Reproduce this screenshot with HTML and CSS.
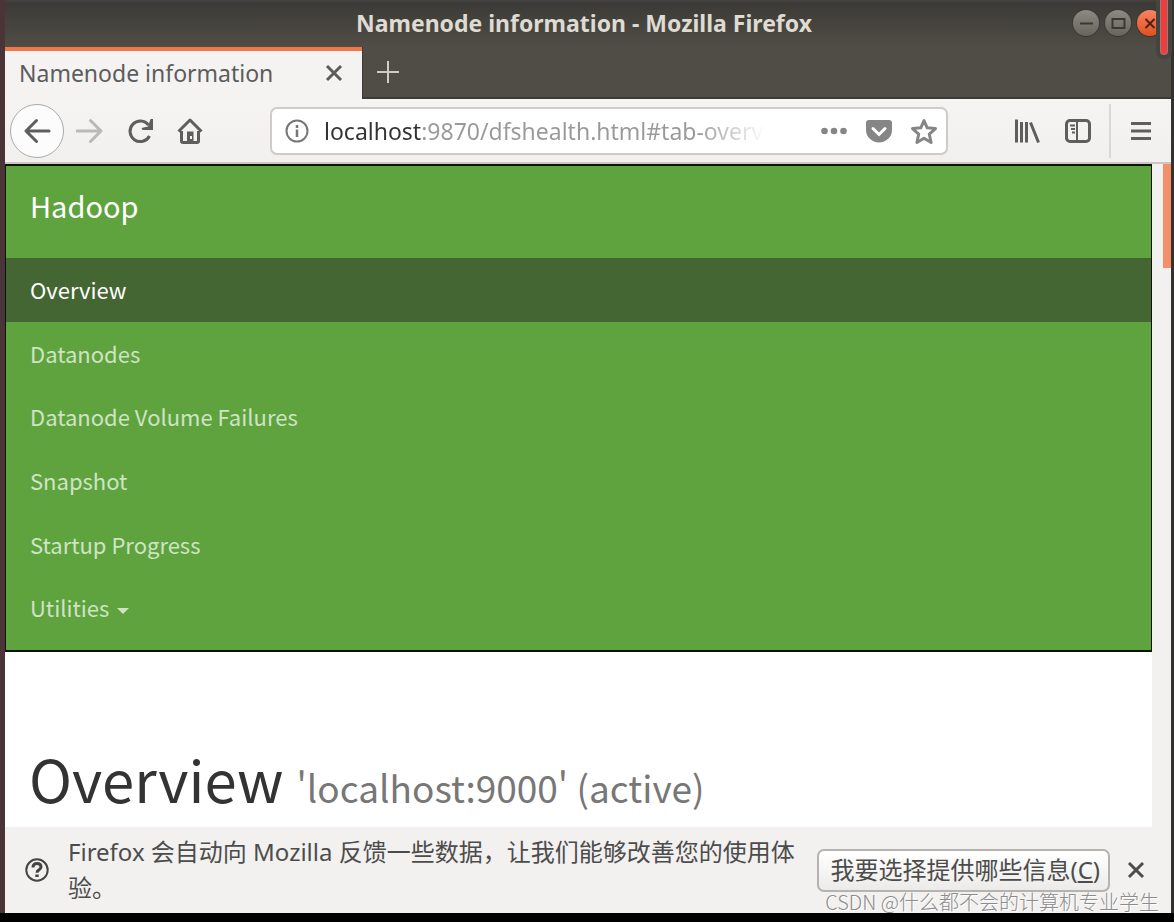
FILE: index.html
```html
<!DOCTYPE html>
<html lang="zh-CN">
<head>
<meta charset="utf-8">
<meta name="viewport" content="width=device-width, initial-scale=1">
<title>Namenode information</title>
<link rel="stylesheet" href="styles.css">
</head>
<body>
<div class="window">
  <header class="titlebar">
    <span class="title">Namenode information - Mozilla Firefox</span>
    <div class="controls">
      <button class="control" aria-label="Minimize"><svg viewBox="0 0 26 26"><path d="M7 13.500h13"/></svg></button>
      <button class="control" aria-label="Maximize"><svg viewBox="0 0 26 26"><path d="M7.500 9h12v9h-12z"/></svg></button>
      <button class="control control-close" aria-label="Close"><svg viewBox="0 0 26 26"><path d="M8.500 9l9 9M17.500 9l-9 9"/></svg></button>
    </div>
  </header>

  <div class="tabs">
    <div class="tab">
      <span class="tab-label">Namenode information</span>
      <button class="icon-button" aria-label="Close tab"><svg class="icon tab-close" viewBox="0 0 24 24"><path d="M5 5l14 14M19 5L5 19"/></svg></button>
    </div>
    <button class="new-tab" aria-label="New tab"><svg class="icon" viewBox="0 0 24 24"><path d="M12 1v22M1 12h22"/></svg></button>
  </div>

  <div class="toolbar">
    <div class="nav-buttons">
      <button class="back" aria-label="Back"><svg class="icon-large" viewBox="0 0 28 28"><path d="M26 14H3M13.500 3.500L3 14l10.500 10.500"/></svg></button>
      <button class="icon-button disabled" aria-label="Forward"><svg class="icon-large" viewBox="0 0 28 28"><path d="M1 14h24M14.500 3.500L25 14 14.500 24.500"/></svg></button>
      <button class="icon-button" aria-label="Reload"><svg class="icon-large" viewBox="0 0 28 28"><path class="stroke-heavy" d="M22.500 8A10.300 10.300 0 1 0 23.500 19"/><path class="solid" d="M27 2v11H16.500l-1-2 6.500-1.500 2.500-7.500z"/></svg></button>
      <button class="icon-button" aria-label="Home"><svg class="icon-large" viewBox="0 0 28 28"><path class="stroke-heavy" d="M2.500 14.500L14 3l11.500 11.500M5.500 14v10q0 1.500 1.500 1.500h14q1.500 0 1.500-1.500V14"/><path class="solid" d="M11 14.500h6.500V26H11z"/><path class="hole" d="M14 19h2v3h-2z"/></svg></button>
    </div>
    <div class="url-bar">
      <svg class="icon info" viewBox="0 0 24 24"><circle cx="12" cy="12" r="10.500"/><path class="stroke-heavy" d="M12 10.500V18M12 6v3"/></svg>
      <input class="url" type="text" aria-label="Address" value="localhost:9870/dfshealth.html#tab-overview">
      <button class="icon-button light" aria-label="Page actions"><svg class="icon-large" viewBox="0 0 28 28"><circle class="solid" cx="4.500" cy="14" r="3.300"/><circle class="solid" cx="14" cy="14" r="3.300"/><circle class="solid" cx="23.500" cy="14" r="3.300"/></svg></button>
      <button class="icon-button light" aria-label="Save to Pocket"><svg class="icon-large" viewBox="0 0 28 28"><path class="solid" d="M4 3h20q3 0 3 3v7a13 12.500 0 0 1-26 0V6q0-3 3-3z"/><path class="check" d="M8 11.500l6 6 6-6"/></svg></button>
      <button class="icon-button light" aria-label="Bookmark"><svg class="icon-large" viewBox="0 0 28 28"><path class="stroke-heavy" d="M14 3.500l3.200 7.300 8.300.800-6.200 5.600 1.800 8.300-7.100-4.300-7.100 4.300 1.800-8.300-6.200-5.600 8.300-.800z"/></svg></button>
    </div>
    <div class="tools">
      <button class="icon-button" aria-label="Library"><svg class="icon-large" viewBox="0 0 28 28"><path class="stroke-heavy" d="M3.500 2.500v23M8.500 5v20.500M13.500 5v20.500M17.500 5.500l8 20"/></svg></button>
      <button class="icon-button" aria-label="Sidebars"><svg class="icon-large" viewBox="0 0 28 28"><rect class="stroke-heavy" x="2.500" y="3.500" width="23" height="21" rx="3.500"/><path class="thin" d="M13 4v20M6 8.500h5M7 12h4M8 15.500h3"/></svg></button>
      <button class="menu" aria-label="Menu"><svg class="icon" viewBox="0 0 24 24"><path class="stroke-heavy" d="M2 4.500h20M2 12h20M2 19.500h20"/></svg></button>
    </div>
  </div>

  <div class="viewport">
    <main class="page">
      <nav class="navbar">
        <a class="brand" href="#">Hadoop</a>
        <ul class="nav-list">
          <li><a class="nav-link active" href="#tab-overview">Overview</a></li>
          <li><a class="nav-link" href="#tab-datanode">Datanodes</a></li>
          <li><a class="nav-link" href="#tab-volume">Datanode Volume Failures</a></li>
          <li><a class="nav-link" href="#tab-snapshot">Snapshot</a></li>
          <li><a class="nav-link" href="#tab-startup">Startup Progress</a></li>
          <li><a class="nav-link" href="#utilities">Utilities <span class="caret"></span></a></li>
        </ul>
      </nav>
      <h1 class="heading">Overview <small class="subheading">'localhost:9000' (active)</small></h1>
    </main>
    <div class="scrollbar"><div class="thumb"></div></div>
  </div>

  <div class="notice">
    <svg class="icon help" viewBox="0 0 24 24"><circle cx="12" cy="12" r="10.700"/><path class="stroke-heavy" d="M8 9.500q0-4 4-4t4 3.300q0 2-2 3t-2 3"/><path class="solid" d="M10.300 16.500h3.400v2.500h-3.400z"/></svg>
    <p class="notice-text">Firefox 会自动向 Mozilla 反馈一些数据，让我们能够改善您的使用体验。</p>
    <button class="choose">我要选择提供哪些信息(<u>C</u>)</button>
    <button class="icon-button" aria-label="Dismiss"><svg class="icon" viewBox="0 0 24 24"><path class="stroke-heavy" d="M5 5l14 14M19 5L5 19"/></svg></button>
  </div>
</div>
<div class="marker"></div>
<div class="watermark">CSDN @什么都不会的计算机专业学生</div>
</body>
</html>
```
FILE: styles.css
```css
* { box-sizing: border-box; }

body {
  margin: 0;
  height: 100vh;
  padding: 0 3px 9px 5px;
  position: relative;
  overflow: hidden;
  background: linear-gradient(to right, #4b3438 5px, #333230 5px);
  font-family: "Noto Sans", "Noto Sans CJK SC", sans-serif;
  font-size: 23px;
  color: #4c4c4c;
}

body::after {
  content: "";
  position: absolute;
  inset: auto 0 0 0;
  height: 9px;
  background: #000;
}

button {
  padding: 0;
  border: 0;
  background: none;
  color: inherit;
  font: inherit;
}

svg {
  display: block;
  fill: none;
  stroke: currentColor;
  stroke-width: 2;
}

.icon { width: 24px; height: 24px; flex: none; }
.icon-large { width: 28px; height: 28px; }
.stroke-heavy { stroke-width: 3; stroke-linejoin: round; }
.solid { fill: currentColor; stroke: none; }
.hole { fill: #f4f3f1; stroke: none; }
.check { stroke: #fff; stroke-width: 3; stroke-linecap: round; }
.thin { stroke-width: 2; }

.window {
  height: 100%;
  display: flex;
  flex-direction: column;
  background: #f2f1ef;
}

.titlebar {
  flex: none;
  height: 47px;
  display: grid;
  grid-template-columns: 1fr auto 1fr;
  align-items: center;
  padding: 0 8px 3px 0;
  background: linear-gradient(#3b3a36, #504d46);
  border-top: 2px solid #42413d;
}

.title {
  grid-column: 2;
  color: #dfdbd2;
  font-weight: 700;
  line-height: 32px;
}

.controls { display: flex; justify-content: flex-end; gap: 6px; }

.control {
  width: 26px;
  height: 26px;
  border-radius: 50%;
  background: linear-gradient(#8c8a82, #66645c);
  box-shadow: 0 0 0 1px #393833;
  color: #393833;
}

.control-close { background: linear-gradient(#f58563, #e2501d); color: #4d2115; }

.tabs {
  flex: none;
  height: 52px;
  display: flex;
  background: #504d46;
  border-bottom: 2px solid #3b3a36;
}

.tab {
  width: 357px;
  height: 52px;
  padding: 0 16px 4px 14px;
  display: flex;
  align-items: center;
  justify-content: space-between;
  border-top: 4px solid #f07746;
  box-shadow: 1px 0 #3b3a36;
  background: #f4f3f1;
  color: #5c5c5c;
}

.tab-close { stroke-width: 3; }

.new-tab { padding: 0 14px; color: #d0ccc4; }

.toolbar {
  flex: none;
  height: 65px;
  display: flex;
  align-items: center;
  padding-left: 5px;
  background: linear-gradient(#f5f4f2, #f1f0ee);
  border-bottom: 2px solid #c9c7c4;
  color: #5e5e5d;
}

.nav-buttons { display: flex; align-items: center; gap: 22px; }

.back {
  width: 54px;
  height: 54px;
  margin-right: -10px;
  padding: 12px;
  border: 1px solid #aaa;
  border-radius: 50%;
  background: #fcfcfc;
}

.back svg, .disabled svg { stroke-width: 3; stroke-linecap: round; stroke-linejoin: round; }
.disabled { color: #bbb9b7; }

.url-bar {
  flex: 1;
  height: 48px;
  margin: 0 65px 0 66px;
  padding: 0 8px 0 13px;
  display: flex;
  align-items: center;
  border: 2px solid #cfcbc6;
  border-radius: 7px;
  background: #fff;
}

.info { color: #777; }
.info .stroke-heavy { stroke-width: 2.5; }

.url {
  flex: 1;
  min-width: 0;
  margin: 0 54px 0 15px;
  padding: 0;
  border: 0;
  outline: 0;
  font: inherit;
  color: transparent;
  background: linear-gradient(to right, #333 99px, #999 99px, #999 calc(100% - 70px), transparent);
  -webkit-background-clip: text;
  background-clip: text;
}

.light { margin-left: 17px; color: #868686; }
.url + .light { margin-left: 0; }

.tools { display: flex; align-items: center; gap: 23px; color: #5e5e5d; }

.menu {
  height: 54px;
  margin-left: -6px;
  padding: 0 18px;
  border-left: 2px solid #dad8d6;
}

.viewport {
  flex: 1;
  min-height: 0;
  display: flex;
}

.page {
  flex: 1;
  overflow: hidden;
  background: #fff;
  font-family: "Noto Sans CJK SC", sans-serif;
}

.navbar {
  padding-bottom: 10px;
  border: solid #0b1406;
  border-width: 2px 1px;
  background: #5fa33e;
}

.brand {
  display: block;
  height: 92px;
  padding: 0 24px;
  line-height: 78px;
  font-size: 29px;
  color: #fff;
  text-decoration: none;
}

.nav-list {
  height: 382px;
  margin: 0;
  padding: 0;
  display: grid;
  grid-auto-rows: 1fr;
  list-style: none;
}

.nav-link {
  display: block;
  height: 100%;
  padding: 0 24px;
  line-height: 62px;
  font-size: 22px;
  color: #cfe3c5;
  text-decoration: none;
}

.active { background: #446633; color: #fff; }

.caret {
  display: inline-block;
  margin-left: 3px;
  vertical-align: middle;
  border: 6px solid transparent;
  border-top-color: currentColor;
  border-bottom: 0;
}

.heading {
  margin: 84px 24px 0;
  font-size: 58px;
  font-weight: 400;
  line-height: 84px;
  color: #333;
}

.subheading { font-size: 37px; color: #777; }

.scrollbar { width: 19px; padding-left: 11px; background: #f2f1ef; }
.thumb { height: 104px; background: #f39069; }

.notice {
  flex: none;
  height: 86px;
  padding: 0 23px 0 20px;
  display: flex;
  align-items: center;
  background: #f2f1ef;
}

.notice-text {
  flex: 1;
  margin: 0 16px 0 19px;
  font-size: 24px;
  line-height: 36px;
}

.choose {
  height: 43px;
  margin-right: 14px;
  padding: 0 8px 0 11px;
  border: 2px solid #b5b3b0;
  border-radius: 7px;
  background: linear-gradient(#fff, #ecebe9);
  font-size: 24px;
  line-height: 36px;
}

.help { color: #444; }

.marker {
  position: absolute;
  top: -8px;
  right: 2px;
  width: 16px;
  height: 67px;
  border: 4px solid #454540;
  border-radius: 8px;
  background: #f43b3b;
  box-shadow: inset 0 0 0 1px #858580;
}

.watermark {
  position: absolute;
  right: 15px;
  bottom: 6px;
  font-family: "Noto Sans CJK SC", sans-serif;
  font-weight: 300;
  font-size: 20px;
  line-height: 28px;
  color: #8c8c8c;
  text-shadow: 1px 1px #fff;
}
```
